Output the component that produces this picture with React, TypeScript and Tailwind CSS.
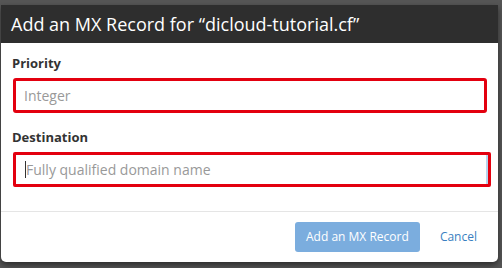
const FONT = { fontFamily: '"Open Sans", "Liberation Sans", sans-serif' };

export default function App() {
  return (
    <div className="w-[502px] h-[268px] bg-[#565656] overflow-hidden" style={FONT}>
      <div className="ml-[1px] mt-[5px] w-[497px] h-[257px] bg-white rounded-b-[5px] shadow-[0_3px_6px_rgba(0,0,0,0.5)] flex flex-col">
        {/* Header */}
        <div className="h-[38px] bg-[#2e2e2e] px-[10px] flex items-center">
          <h2 className="text-[18px] leading-[38px] text-white">Add an MX Record for “dicloud-tutorial.cf”</h2>
        </div>

        {/* Body */}
        <div className="pt-[11px] pl-[12px] pr-[11px] pb-[24px] border-b border-[#e5e5e5] flex flex-col">
          <label className="text-[13px] leading-[18px] font-bold text-[#333] -ml-[1px]">Priority</label>
          <input
            placeholder="Integer"
            className="mt-[6px] h-[35px] w-[474px] border-[3px] border-[#e3000f] rounded-[3px] px-[8px] text-[14px] text-[#333] placeholder:text-[#999] outline-none"
          />
          <label className="mt-[15px] text-[13px] leading-[18px] font-bold text-[#333] -ml-[1px]">Destination</label>
          <div className="relative mt-[6px] w-[478px] h-[35px]">
            <input
              placeholder="Fully qualified domain name"
              className="h-[35px] w-[478px] border-[3px] border-[#e3000f] rounded-[2px] px-[10px] text-[14px] text-[#333] placeholder:text-[#999] outline-none shadow-[inset_-2px_0_0_#b7d4ee]"
            />
            <span className="absolute left-[12px] top-[9px] w-px h-[17px] bg-[#333]" />
          </div>
        </div>

        {/* Footer */}
        <div className="flex-1 flex items-start justify-end pt-[10px] pr-[9px]">
          <button className="h-[30px] w-[125px] rounded-[3px] bg-[#7badde] text-white text-[12px]">Add an MX Record</button>
          <button className="ml-[8px] h-[30px] px-[12px] text-[12px] text-[#3a7fc1]">Cancel</button>
        </div>
      </div>
    </div>
  );
}
